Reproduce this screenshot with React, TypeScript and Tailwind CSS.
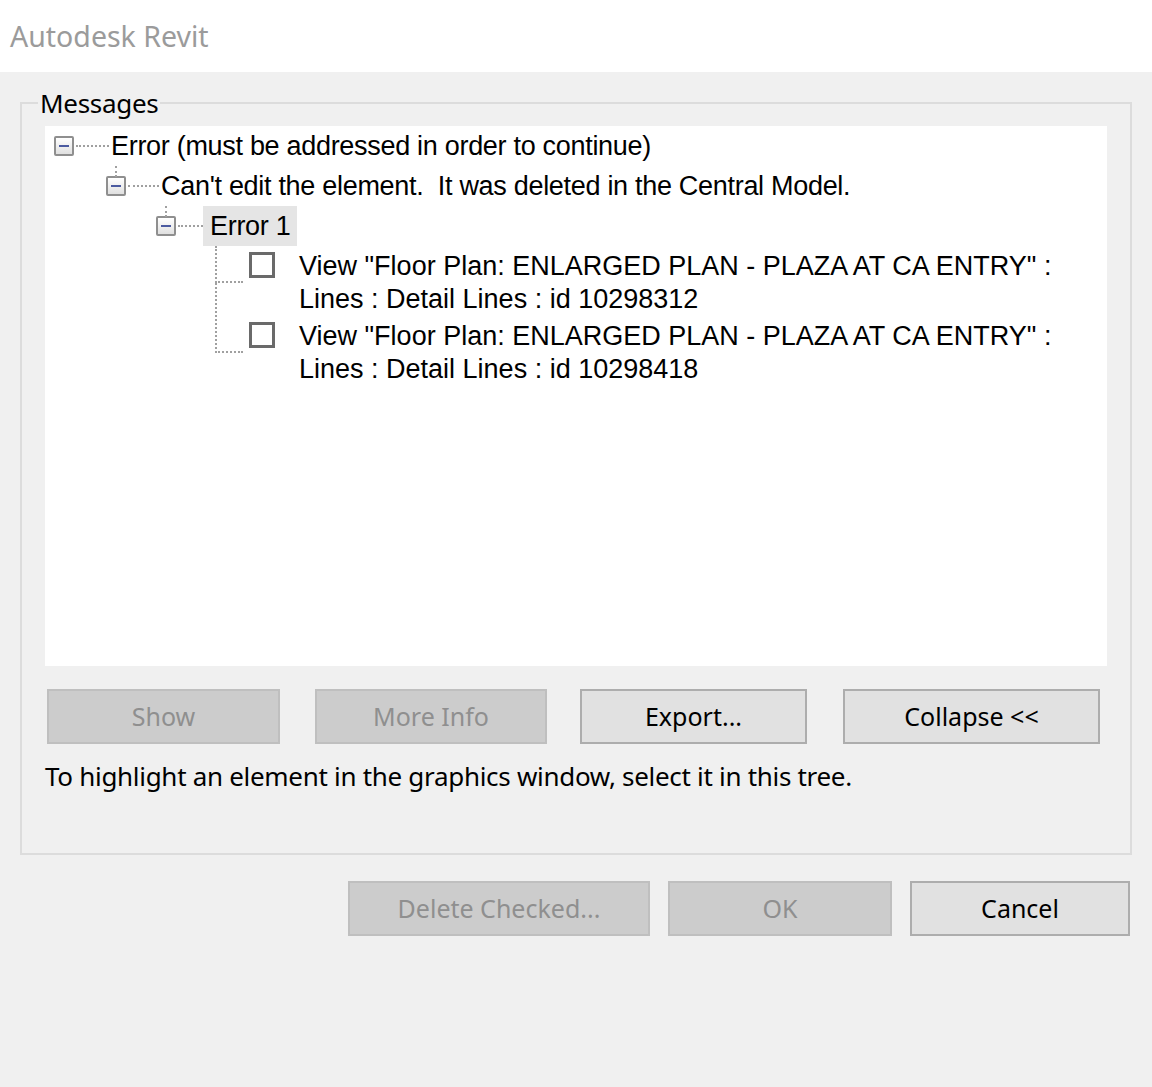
import React from 'react';

const TREE_FONT = { fontFamily: '"Liberation Sans", Arial, sans-serif' };

function Expander() {
  return (
    <div className="w-[20px] h-[20px] border-2 border-[#8f8f8f] rounded-[2px] bg-gradient-to-b from-white to-[#e0e0e0] flex items-center justify-center shrink-0">
      <div className="w-[10px] h-[2px] bg-[#4b5aa0]" />
    </div>
  );
}

function Checkbox() {
  return <div className="w-[26px] h-[26px] border-[3px] border-[#6a6a6a] bg-white shrink-0" />;
}

function Button({ label, width, disabled }: { label: string; width: string; disabled?: boolean }) {
  return (
    <div
      className={`${width} h-[55px] flex items-center justify-center border-2 text-[25px] ${
        disabled ? 'bg-[#cccccc] border-[#bfbfbf] text-[#8f8f8f]' : 'bg-[#e1e1e1] border-[#adadad] text-black'
      }`}
    >
      {label}
    </div>
  );
}

export default function App() {
  return (
    <div
      className="w-[1152px] h-[1087px] bg-[#f0f0f0] flex flex-col overflow-hidden"
      style={{ fontFamily: '"Noto Sans", "Open Sans", sans-serif' }}
    >
      {/* Title bar */}
      <div className="h-[72px] bg-white flex items-center pl-[10px] text-[28.5px] text-[#9b9b9b]">
        Autodesk Revit
      </div>

      {/* Messages group */}
      <fieldset className="mx-[20px] mt-[18px] h-[765px] border-2 border-[#dcdcdc] px-[23px]">
        <legend className="ml-[-7px] px-[2px] text-[26px] leading-[26px] text-black tracking-[-0.3px]">Messages</legend>

        {/* Tree view */}
        <div className="mt-[10px] h-[540px] bg-white text-[27px] text-black tracking-[-0.3px]" style={TREE_FONT}>
          <div className="h-[40px] flex items-center pl-[9px]">
            <Expander />
            <div className="w-[33px] border-t-2 border-dotted border-[#a0a0a0] mx-[2px]" />
            <span>Error (must be addressed in order to continue)</span>
          </div>
          <div className="h-[40px] flex items-center pl-[61px] relative">
            <div className="absolute left-[70px] top-0 h-[11px] border-l-2 border-dotted border-[#a0a0a0]" />
            <Expander />
            <div className="w-[31px] border-t-2 border-dotted border-[#a0a0a0] mx-[2px]" />
            <span>Can't edit the element.&nbsp; It was deleted in the Central Model.</span>
          </div>
          <div className="h-[40px] flex items-center pl-[111px] relative">
            <div className="absolute left-[120px] top-0 h-[11px] border-l-2 border-dotted border-[#a0a0a0]" />
            <Expander />
            <div className="w-[25px] border-t-2 border-dotted border-[#a0a0a0] ml-[2px]" />
            <span className="h-[40px] flex items-center bg-[#e5e5e5] px-[7px]">Error 1</span>
          </div>

          {/* Children */}
          <div className="flex pl-[170px]">
            <div className="flex flex-col w-[28px]">
              <div className="h-[37px] border-l-2 border-b-2 border-dotted border-[#a0a0a0]" />
              <div className="h-[70px] border-l-2 border-b-2 border-dotted border-[#a0a0a0]" />
            </div>
            <div className="flex flex-col pl-[6px]">
              {['10298312', '10298418'].map((id) => (
                <div key={id} className="flex pt-[4px] h-[70px]">
                  <div className="pt-[2px]">
                    <Checkbox />
                  </div>
                  <div className="pl-[24px] leading-[33px] tracking-[0px]">
                    <div>View "Floor Plan: ENLARGED PLAN - PLAZA AT CA ENTRY" :</div>
                    <div>Lines : Detail Lines : id {id}</div>
                  </div>
                </div>
              ))}
            </div>
          </div>
        </div>

        {/* Tree buttons */}
        <div className="flex mt-[23px] pl-[2px]">
          <Button label="Show" width="w-[233px]" disabled />
          <div className="w-[35px]" />
          <Button label="More Info" width="w-[232px]" disabled />
          <div className="w-[33px]" />
          <Button label="Export..." width="w-[227px]" />
          <div className="w-[36px]" />
          <Button label="Collapse <<" width="w-[257px]" />
        </div>

        <div className="mt-[13px] text-[26px] text-black tracking-[-0.3px]">
          To highlight an element in the graphics window, select it in this tree.
        </div>
      </fieldset>

      {/* Dialog buttons */}
      <div className="flex justify-end gap-[18px] pr-[22px] mt-[26px]">
        <Button label="Delete Checked..." width="w-[302px]" disabled />
        <Button label="OK" width="w-[224px]" disabled />
        <Button label="Cancel" width="w-[220px]" />
      </div>
    </div>
  );
}
